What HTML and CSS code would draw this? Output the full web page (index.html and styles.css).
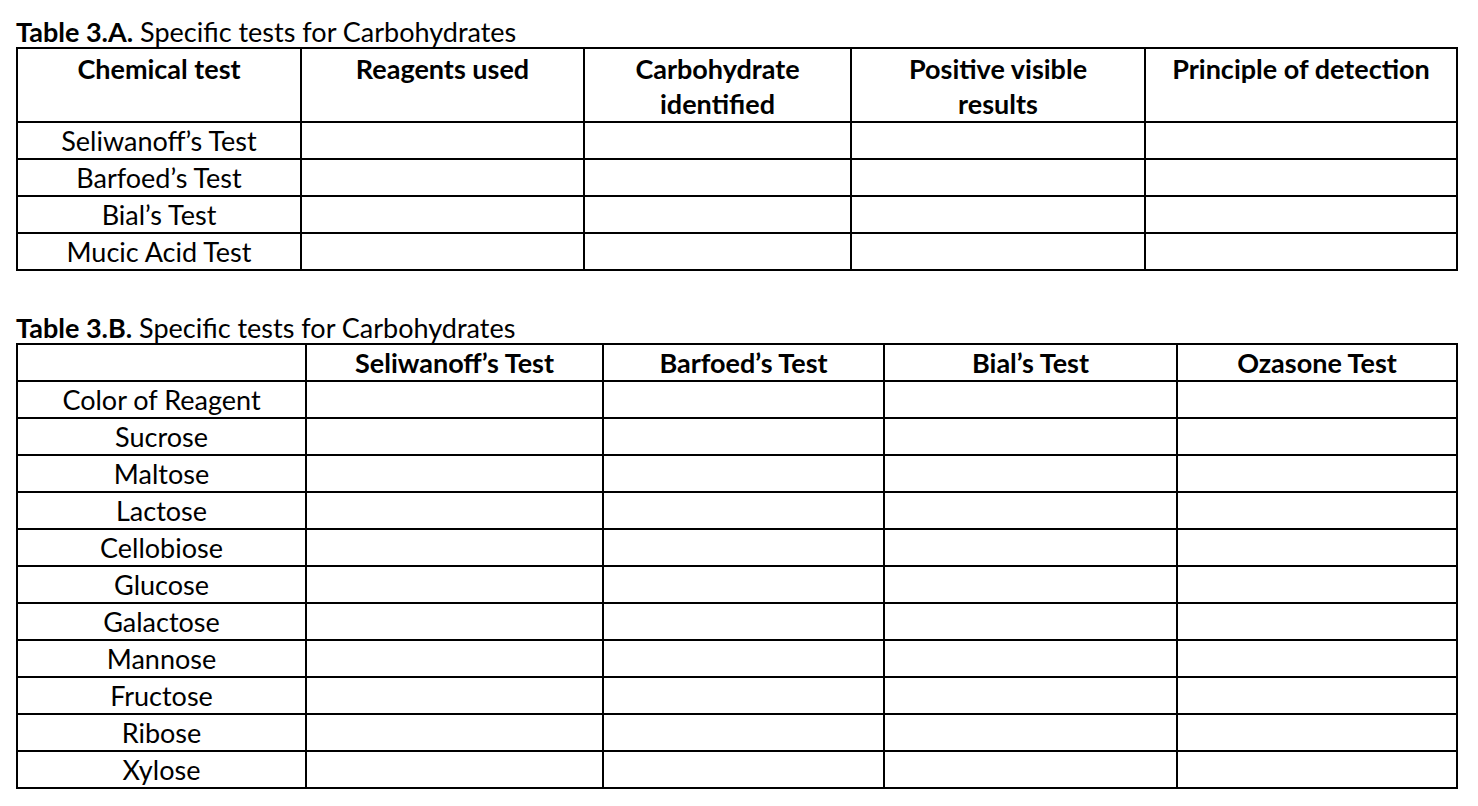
FILE: index.html
```html
<!DOCTYPE html>
<html>
<head>
<meta charset="utf-8">
<link rel="stylesheet" href="styles.css">
</head>
<body>
<div class="page">
  <section class="block block-a">
    <p class="caption"><b>Table 3.A.</b> Specific tests for Carbohydrates</p>
    <table class="grid grid-a">
      <colgroup>
        <col class="a1"><col class="a2"><col class="a3"><col class="a4"><col class="a5">
      </colgroup>
      <thead>
        <tr class="head-a">
          <th>Chemical test</th>
          <th>Reagents used</th>
          <th>Carbohydrate<br>identified</th>
          <th>Positive visible<br>results</th>
          <th>Principle of detection</th>
        </tr>
      </thead>
      <tbody>
        <tr><td>Seliwanoff’s Test</td><td></td><td></td><td></td><td></td></tr>
        <tr><td>Barfoed’s Test</td><td></td><td></td><td></td><td></td></tr>
        <tr><td>Bial’s Test</td><td></td><td></td><td></td><td></td></tr>
        <tr><td>Mucic Acid Test</td><td></td><td></td><td></td><td></td></tr>
      </tbody>
    </table>
  </section>

  <section class="block block-b">
    <p class="caption"><b>Table 3.B.</b> Specific tests for Carbohydrates</p>
    <table class="grid grid-b">
      <colgroup>
        <col class="b1"><col class="b2"><col class="b3"><col class="b4"><col class="b5">
      </colgroup>
      <thead>
        <tr class="head-b">
          <th></th>
          <th>Seliwanoff’s Test</th>
          <th>Barfoed’s Test</th>
          <th>Bial’s Test</th>
          <th>Ozasone Test</th>
        </tr>
      </thead>
      <tbody>
        <tr><td>Color of Reagent</td><td></td><td></td><td></td><td></td></tr>
        <tr><td>Sucrose</td><td></td><td></td><td></td><td></td></tr>
        <tr><td>Maltose</td><td></td><td></td><td></td><td></td></tr>
        <tr><td>Lactose</td><td></td><td></td><td></td><td></td></tr>
        <tr><td>Cellobiose</td><td></td><td></td><td></td><td></td></tr>
        <tr><td>Glucose</td><td></td><td></td><td></td><td></td></tr>
        <tr><td>Galactose</td><td></td><td></td><td></td><td></td></tr>
        <tr><td>Mannose</td><td></td><td></td><td></td><td></td></tr>
        <tr><td>Fructose</td><td></td><td></td><td></td><td></td></tr>
        <tr><td>Ribose</td><td></td><td></td><td></td><td></td></tr>
        <tr><td>Xylose</td><td></td><td></td><td></td><td></td></tr>
      </tbody>
    </table>
  </section>
</div>
</body>
</html>
```

FILE: styles.css
```css
html, body {
  margin: 0;
  padding: 0;
  background: #ffffff;
}
body {
  font-family: Lato, "Open Sans", "Liberation Sans", sans-serif;
  color: #000;
}
.page {
  padding: 16px 20px 0 16px;
  display: flex;
  flex-direction: column;
}
.block-b {
  margin-top: 41px;
}
.caption {
  margin: 0;
  font-size: 27px;
  line-height: 31px;
  height: 31px;
}
.caption b {
  font-weight: 700;
}
.grid {
  border-collapse: collapse;
  table-layout: fixed;
  width: 1440px;
  font-size: 27px;
}
.grid th, .grid td {
  border: 2px solid #000;
  padding: 0;
  text-align: center;
  height: 35px;
  line-height: 30px;
}
.grid th {
  font-weight: 700;
}
.head-a th {
  height: 68px;
  vertical-align: top;
  padding-top: 2px;
  line-height: 35px;
}
.head-b th {
  height: 35px;
}
.a1 { width: 284px; }
.a2 { width: 283px; }
.a3 { width: 267px; }
.a4 { width: 294px; }
.a5 { width: 312px; }
.b1 { width: 289px; }
.b2 { width: 297px; }
.b3 { width: 281px; }
.b4 { width: 293px; }
.b5 { width: 280px; }
```
